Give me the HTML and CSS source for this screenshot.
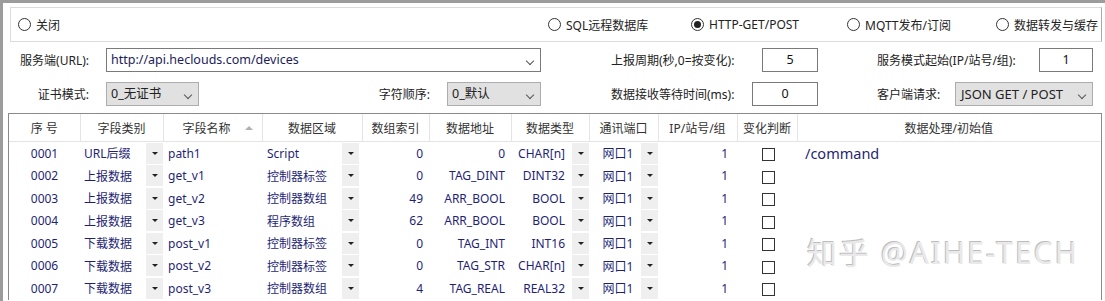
FILE: index.html
```html
<!DOCTYPE html>
<html>

<head>
    <meta charset="utf-8">
    <title>HTTP-GET/POST 配置</title>
    <link rel="stylesheet" href="styles.css">
</head>

<body>
    <div class="win">

        <div class="modes">
            <label class="radio off-item"><span class="dot"></span>关闭</label>
            <div class="modes-right">
                <label class="radio w-sql"><span class="dot"></span>SQL远程数据库</label>
                <label class="radio w-http"><span class="dot on"></span>HTTP-GET/POST</label>
                <label class="radio w-mqtt"><span class="dot"></span>MQTT发布/订阅</label>
                <label class="radio w-fwd"><span class="dot"></span>数据转发与缓存</label>
            </div>
        </div>

        <div class="form">
            <div class="row">
                <div class="g g1">
                    <span class="lbl">服务端(URL):</span>
                    <div class="combo url">http://api.heclouds.com/devices<span class="chev"></span></div>
                </div>
                <div class="g g2">
                    <span>上报周期(秒,0=按变化):</span>
                    <div class="edit w56">5</div>
                </div>
                <div class="g g3">
                    <span>服务模式起始(IP/站号/组):</span>
                    <div class="edit w54">1</div>
                </div>
            </div>
            <div class="row">
                <div class="g g1">
                    <span class="lbl">证书模式:</span>
                    <div class="sel w93">0_无证书<span class="chev"></span></div>
                    <span class="lbl2">字符顺序:</span>
                    <div class="sel w94">0_默认<span class="chev"></span></div>
                </div>
                <div class="g g2">
                    <span>数据接收等待时间(ms):</span>
                    <div class="edit w66">0</div>
                </div>
                <div class="g g3">
                    <span>客户端请求:</span>
                    <div class="sel w138 big">JSON GET / POST<span class="chev"></span></div>
                </div>
            </div>
        </div>

        <div class="grid">
            <table>
                <colgroup>
                    <col style="width:71px">
                    <col style="width:83px">
                    <col style="width:99px">
                    <col style="width:100px">
                    <col style="width:67px">
                    <col style="width:82px">
                    <col style="width:78px">
                    <col style="width:69px">
                    <col style="width:79px">
                    <col style="width:60px">
                    <col style="width:303px">
                </colgroup>
                <thead>
                    <tr>
                        <th>序 号</th>
                        <th>字段类别</th>
                        <th><span class="sorted">字段名称<span class="up"></span></span></th>
                        <th>数据区域</th>
                        <th>数组索引</th>
                        <th>数据地址</th>
                        <th>数据类型</th>
                        <th>通讯端口</th>
                        <th>IP/站号/组</th>
                        <th>变化判断</th>
                        <th class="last">数据处理/初始值</th>
                    </tr>
                </thead>
                <tbody>
                    <tr>
                        <td class="c">0001</td>
                        <td><div class="drop"><span>URL后缀</span><i class="dd"></i></div></td>
                        <td class="l">path1</td>
                        <td><div class="drop pr"><span>Script</span><i class="dd"></i></div></td>
                        <td class="r">0</td>
                        <td class="r">0</td>
                        <td><div class="drop rt"><span>CHAR[n]</span><i class="dd"></i></div></td>
                        <td><div class="drop ct"><span>网口1</span><i class="dd"></i></div></td>
                        <td class="r ip">1</td>
                        <td class="c"><span class="chk"></span></td>
                        <td class="val">/command</td>
                    </tr>
                    <tr>
                        <td class="c">0002</td>
                        <td><div class="drop"><span>上报数据</span><i class="dd"></i></div></td>
                        <td class="l">get_v1</td>
                        <td><div class="drop pr"><span>控制器标签</span><i class="dd"></i></div></td>
                        <td class="r">0</td>
                        <td class="r">TAG_DINT</td>
                        <td><div class="drop rt"><span>DINT32</span><i class="dd"></i></div></td>
                        <td><div class="drop ct"><span>网口1</span><i class="dd"></i></div></td>
                        <td class="r ip">1</td>
                        <td class="c"><span class="chk"></span></td>
                        <td class="val"></td>
                    </tr>
                    <tr>
                        <td class="c">0003</td>
                        <td><div class="drop"><span>上报数据</span><i class="dd"></i></div></td>
                        <td class="l">get_v2</td>
                        <td><div class="drop pr"><span>控制器数组</span><i class="dd"></i></div></td>
                        <td class="r">49</td>
                        <td class="r">ARR_BOOL</td>
                        <td><div class="drop rt"><span>BOOL</span><i class="dd"></i></div></td>
                        <td><div class="drop ct"><span>网口1</span><i class="dd"></i></div></td>
                        <td class="r ip">1</td>
                        <td class="c"><span class="chk"></span></td>
                        <td class="val"></td>
                    </tr>
                    <tr>
                        <td class="c">0004</td>
                        <td><div class="drop"><span>上报数据</span><i class="dd"></i></div></td>
                        <td class="l">get_v3</td>
                        <td><div class="drop pr"><span>程序数组</span><i class="dd"></i></div></td>
                        <td class="r">62</td>
                        <td class="r">ARR_BOOL</td>
                        <td><div class="drop rt"><span>BOOL</span><i class="dd"></i></div></td>
                        <td><div class="drop ct"><span>网口1</span><i class="dd"></i></div></td>
                        <td class="r ip">1</td>
                        <td class="c"><span class="chk"></span></td>
                        <td class="val"></td>
                    </tr>
                    <tr>
                        <td class="c">0005</td>
                        <td><div class="drop"><span>下载数据</span><i class="dd"></i></div></td>
                        <td class="l">post_v1</td>
                        <td><div class="drop pr"><span>控制器标签</span><i class="dd"></i></div></td>
                        <td class="r">0</td>
                        <td class="r">TAG_INT</td>
                        <td><div class="drop rt"><span>INT16</span><i class="dd"></i></div></td>
                        <td><div class="drop ct"><span>网口1</span><i class="dd"></i></div></td>
                        <td class="r ip">1</td>
                        <td class="c"><span class="chk"></span></td>
                        <td class="val"></td>
                    </tr>
                    <tr>
                        <td class="c">0006</td>
                        <td><div class="drop"><span>下载数据</span><i class="dd"></i></div></td>
                        <td class="l">post_v2</td>
                        <td><div class="drop pr"><span>控制器标签</span><i class="dd"></i></div></td>
                        <td class="r">0</td>
                        <td class="r">TAG_STR</td>
                        <td><div class="drop rt"><span>CHAR[n]</span><i class="dd"></i></div></td>
                        <td><div class="drop ct"><span>网口1</span><i class="dd"></i></div></td>
                        <td class="r ip">1</td>
                        <td class="c"><span class="chk"></span></td>
                        <td class="val"></td>
                    </tr>
                    <tr>
                        <td class="c">0007</td>
                        <td><div class="drop"><span>下载数据</span><i class="dd"></i></div></td>
                        <td class="l">post_v3</td>
                        <td><div class="drop pr"><span>控制器数组</span><i class="dd"></i></div></td>
                        <td class="r">4</td>
                        <td class="r">TAG_REAL</td>
                        <td><div class="drop rt"><span>REAL32</span><i class="dd"></i></div></td>
                        <td><div class="drop ct"><span>网口1</span><i class="dd"></i></div></td>
                        <td class="r ip">1</td>
                        <td class="c"><span class="chk"></span></td>
                        <td class="val"></td>
                    </tr>
                </tbody>
            </table>
        </div>

        <!-- watermark over the grid -->
        <div class="mark">知乎 @AIHE-TECH</div>
    </div>
</body>

</html>
```

FILE: styles.css
```css
body {
    margin: 0;
    font-family: "Noto Sans", "Noto Sans CJK SC", sans-serif;
    font-size: 12px;
    color: #222;
    background: #fff;
    overflow: hidden;
}

.win {
    position: relative;
    height: 298px;
    border-top: 3px solid #9c9c9c;
    border-left: 3px solid #9c9c9c;
}

/* mode radios */
.modes {
    display: flex;
    align-items: center;
    height: 33px;
    margin: 4px 3px 0 7px;
    border: 1px solid #dcdcdc;
    border-right-color: #a9a9a9;
    padding-left: 7px;
}

.off-item {
    flex: 1;
}

.modes-right {
    display: flex;
    width: 553px;
}

.radio {
    display: flex;
    align-items: center;
    height: 20px;
    color: #222;
}

.w-sql { width: 143px; }
.w-http { width: 156px; }
.w-mqtt { width: 149px; }
.w-fwd { width: 105px; }

.dot {
    box-sizing: border-box;
    width: 13px;
    height: 13px;
    border: 1px solid #333;
    border-radius: 50%;
    margin-right: 5px;
    position: relative;
}

.dot.on::after {
    content: "";
    position: absolute;
    left: 2px;
    top: 2px;
    width: 7px;
    height: 7px;
    border-radius: 50%;
    background: #222;
}

/* parameter form */
.form {
    padding: 6px 0 0 15px;
}

.row {
    display: flex;
    align-items: center;
    height: 24px;
}

.row + .row {
    margin-top: 10px;
}

.g {
    display: flex;
    align-items: center;
    height: 24px;
}

.g1 { width: 523px; }
.g2 { width: 207px; margin-left: 70px; justify-content: space-between; }
.g3 { width: 216px; margin-left: 59px; justify-content: space-between; }

.lbl {
    width: 71px;
    text-align: right;
    margin-right: 17px;
    white-space: nowrap;
}

.lbl2 {
    margin-left: auto;
    margin-right: 17px;
}

.edit,
.combo,
.sel {
    box-sizing: border-box;
    height: 24px;
    line-height: 22px;
    position: relative;
}

.edit {
    border: 1px solid #7a7a7a;
    text-align: center;
    color: #111;
    font-size: 12.5px;
}

.w54 { width: 54px; }
.w56 { width: 56px; }
.w66 { width: 66px; }
.w93 { width: 93px; }
.w94 { width: 94px; }
.w138 { width: 138px; }

.combo {
    flex: 1;
    border: 1px solid #7a7a7a;
    padding-left: 4px;
    color: #1c1c5c;
    font-size: 12.5px;
}

.sel {
    border: 1px solid #adadad;
    background: #e1e1e1;
    padding-left: 4px;
    color: #222;
    font-size: 12.5px;
}

.sel.big {
    font-size: 13px;
    padding-left: 5px;
}

.chev {
    position: absolute;
    right: 7px;
    top: 9px;
    width: 5px;
    height: 5px;
    border-right: 1px solid #555;
    border-bottom: 1px solid #555;
    transform: rotate(45deg);
}

/* data grid */
.grid {
    margin: 7px 3px 0 5px;
    border-top: 1px solid #8a8a8a;
    border-left: 1px solid #8a8a8a;
    border-right: 1px solid #8a8a8a;
}

table {
    border-collapse: collapse;
    table-layout: fixed;
    width: 1091px;
}

th {
    height: 27px;
    padding: 0;
    font-weight: normal;
    color: #333;
    text-align: center;
    border-right: 1px solid #e4e4e4;
    border-bottom: 1px solid #e4e4e4;
    white-space: nowrap;
}

th.last {
    border-right: 0;
}

.sorted {
    display: inline-flex;
    align-items: center;
    margin-left: 10px;
}

.up {
    margin-left: 14px;
    width: 0;
    height: 0;
    border-left: 4px solid transparent;
    border-right: 4px solid transparent;
    border-bottom: 4px solid #b0b0b0;
}

td {
    height: 22.5px;
    padding: 0;
    color: #1f1f76;
    white-space: nowrap;
}

td.c { text-align: center; }
td.l { padding-left: 5px; }
td.r { text-align: right; padding-right: 6px; }
td.ip { padding-right: 9px; }

.drop {
    display: flex;
    align-items: center;
    height: 22px;
    padding-left: 4px;
}

.drop span {
    flex: 1;
}

.drop.pr {
    padding-left: 5px;
    padding-right: 3px;
}

.drop.rt span {
    text-align: right;
    padding-right: 7px;
}

.drop.ct span {
    text-align: center;
}

.drop.ct {
    padding-left: 6px;
}

.dd {
    width: 17px;
    height: 21px;
    background: #efefef;
    display: flex;
    align-items: center;
    justify-content: center;
}

.dd::after {
    content: "";
    border-left: 3px solid transparent;
    border-right: 3px solid transparent;
    border-top: 3px solid #222;
}

.chk {
    display: inline-block;
    box-sizing: border-box;
    width: 13px;
    height: 13px;
    border: 1px solid #333;
    background: #fff;
    vertical-align: middle;
    margin-left: 2px;
}

td.val {
    padding-left: 8px;
    font-size: 14.5px;
}

.mark {
    position: absolute;
    left: 804px;
    top: 226px;
    font-size: 30px;
    letter-spacing: 2px;
    color: #e9e9e9;
    text-shadow: -1px -1px 0 #bdbdbd;
    white-space: nowrap;
}
```
